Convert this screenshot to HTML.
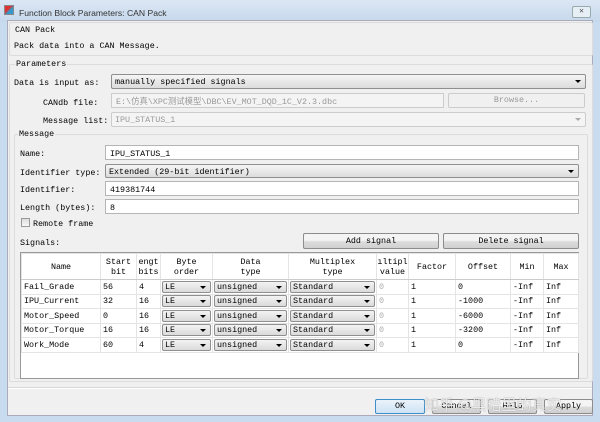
<!DOCTYPE html>
<html><head><meta charset="utf-8"><style>
*{margin:0;padding:0;box-sizing:border-box}
body{width:600px;height:422px;overflow:hidden;background:#c9dbee;font-family:"Liberation Mono","Noto Sans CJK SC",monospace;font-size:8.4px;color:#000;position:relative}
.a{position:absolute;white-space:nowrap;line-height:10px}
.tb{position:absolute;background:#fff;border:1px solid #b5b5b5;padding:3px 0 0 4px;line-height:10px}
.dd{position:absolute;border:1px solid #8e8f8f;border-radius:2px;background:linear-gradient(#f5f5f5,#dcdcdc);padding:2px 0 0 3px;line-height:10px}
.dd:after{content:"";position:absolute;right:4px;top:5px;border-left:3px solid transparent;border-right:3px solid transparent;border-top:3px solid #000}
.dis{color:#999;background:#f4f4f4;border-color:#ccc}
.dis:after{border-top-color:#aaa}
.btn{position:absolute;border:1px solid #8c8c8c;border-radius:2px;background:linear-gradient(#f4f4f4 45%,#dcdcdc 55%,#d0d0d0);text-align:center;line-height:13px}
.grp{position:absolute;border:1px solid #dcdcdc;border-radius:2px}
table{position:absolute;border-collapse:collapse;table-layout:fixed;background:#fff}
td{border:1px solid #e4e4e4;height:14.5px;padding:0 2px;white-space:nowrap;overflow:hidden;line-height:10px}
th{font-weight:normal;border:1px solid #e4e4e4;border-bottom:1px solid #ccc;height:26px;line-height:10px;overflow:hidden;white-space:nowrap}
.c{position:relative;height:12px;border:1px solid #8e8f8f;border-radius:2px;background:linear-gradient(#f3f3f3,#dadada);padding-left:2px;margin:0 -1px}
.c:after{content:"";position:absolute;right:4px;top:4px;border-left:3px solid transparent;border-right:3px solid transparent;border-top:3px solid #000}
.g{color:#aaa}
</style></head><body>
<div class="a" style="left:0;top:0;width:600px;height:22px;background:linear-gradient(#dbe7f4,#c6d8ec)"></div>
<div class="a" style="left:4px;top:5px;width:10px;height:10px;background:linear-gradient(135deg,#d33 40%,#39c 60%);border:1px solid #888"></div>
<div class="a" style="left:19px;top:8px;font-family:'Liberation Sans',sans-serif;font-size:8.6px;color:#333">Function Block Parameters: CAN Pack</div>
<div class="a" style="left:572px;top:6px;width:19px;height:12px;border:1px solid #9aa;border-radius:2px;background:#e6eef6;font-size:8px;text-align:center;color:#555">✕</div>
<div class="a" style="left:7px;top:20px;width:586px;height:396px;background:#f0f0f0;border:1px solid #aab"></div>
<div class="grp" style="left:9px;top:22px;width:584px;height:34px"></div>
<div class="a" style="left:15px;top:25px">CAN Pack</div>
<div class="a" style="left:14px;top:41px">Pack data into a CAN Message.</div>
<div class="grp" style="left:9px;top:64px;width:584px;height:318px"></div>
<div class="a" style="left:15px;top:59px;background:#f0f0f0;padding:0 1px">Parameters</div>
<div class="a" style="left:14px;top:78px">Data is input as:</div>
<div class="dd" style="left:111px;top:74px;width:475px;height:15px">manually specified signals</div>
<div class="a" style="left:43px;top:98px">CANdb file:</div>
<div class="tb dis" style="left:111px;top:93px;width:333px;height:15px;color:#999">E:\仿真\XPC测试模型\DBC\EV_MOT_DQD_1C_V2.3.dbc</div>
<div class="btn" style="left:448px;top:93px;width:137px;height:15px;color:#999;background:#f0f0f0;border-color:#ccc">Browse...</div>
<div class="a" style="left:43px;top:116px">Message list:</div>
<div class="dd dis" style="left:111px;top:112px;width:475px;height:15px">IPU_STATUS_1</div>
<div class="grp" style="left:14px;top:134px;width:574px;height:245px"></div>
<div class="a" style="left:18px;top:129px;background:#f0f0f0;padding:0 1px">Message</div>
<div class="a" style="left:20px;top:149px">Name:</div>
<div class="tb" style="left:105px;top:145px;width:474px;height:15px">IPU_STATUS_1</div>
<div class="a" style="left:20px;top:168px">Identifier type:</div>
<div class="dd" style="left:105px;top:164px;width:474px;height:14px">Extended (29-bit identifier)</div>
<div class="a" style="left:20px;top:185px">Identifier:</div>
<div class="tb" style="left:105px;top:181px;width:474px;height:15px">419381744</div>
<div class="a" style="left:20px;top:203px">Length (bytes):</div>
<div class="tb" style="left:105px;top:199px;width:474px;height:15px">8</div>
<div class="a" style="left:21px;top:218px;width:9px;height:9px;border:1px solid #999;background:linear-gradient(#ddd,#f8f8f8)"></div>
<div class="a" style="left:33px;top:219px">Remote frame</div>
<div class="a" style="left:20px;top:238px">Signals:</div>
<div class="btn" style="left:303px;top:233px;width:136px;height:16px;line-height:14px">Add signal</div>
<div class="btn" style="left:443px;top:233px;width:136px;height:16px;line-height:14px">Delete signal</div>
<div class="a" style="left:20px;top:252px;width:559px;height:127px;background:#fff;border:1px solid #999"></div>
<table style="left:21px;top:253px;width:557px">
<colgroup><col style="width:79px"><col style="width:36px"><col style="width:24px"><col style="width:52px"><col style="width:76px"><col style="width:88px"><col style="width:32px"><col style="width:47px"><col style="width:55px"><col style="width:33px"><col style="width:35px"></colgroup>
<tr><th>Name</th><th>Start<br>bit</th><th>engt<br>bits</th><th>Byte<br>order</th><th>Data<br>type</th><th>Multiplex<br>type</th><th>ıltipl<br>value</th><th>Factor</th><th>Offset</th><th>Min</th><th>Max</th></tr>
<tr><td>Fail_Grade</td><td>56</td><td>4</td><td><div class="c">LE</div></td><td><div class="c">unsigned</div></td><td><div class="c">Standard</div></td><td class="g">0</td><td>1</td><td>0</td><td>-Inf</td><td>Inf</td></tr>
<tr><td>IPU_Current</td><td>32</td><td>16</td><td><div class="c">LE</div></td><td><div class="c">unsigned</div></td><td><div class="c">Standard</div></td><td class="g">0</td><td>1</td><td>-1000</td><td>-Inf</td><td>Inf</td></tr>
<tr><td>Motor_Speed</td><td>0</td><td>16</td><td><div class="c">LE</div></td><td><div class="c">unsigned</div></td><td><div class="c">Standard</div></td><td class="g">0</td><td>1</td><td>-6000</td><td>-Inf</td><td>Inf</td></tr>
<tr><td>Motor_Torque</td><td>16</td><td>16</td><td><div class="c">LE</div></td><td><div class="c">unsigned</div></td><td><div class="c">Standard</div></td><td class="g">0</td><td>1</td><td>-3200</td><td>-Inf</td><td>Inf</td></tr>
<tr><td>Work_Mode</td><td>60</td><td>4</td><td><div class="c">LE</div></td><td><div class="c">unsigned</div></td><td><div class="c">Standard</div></td><td class="g">0</td><td>1</td><td>0</td><td>-Inf</td><td>Inf</td></tr>
</table>
<div class="a" style="left:8px;top:387px;width:584px;border-top:1px solid #d8d8d8;border-bottom:1px solid #fff"></div>
<div class="btn" style="left:375px;top:399px;width:50px;height:15px;border-color:#3c8fc8;background:linear-gradient(#eaf3fb,#cfe3f3)">OK</div>
<div class="btn" style="left:432px;top:399px;width:49px;height:15px">Cancel</div>
<div class="btn" style="left:488px;top:399px;width:49px;height:15px">Help</div>
<div class="btn" style="left:544px;top:399px;width:49px;height:15px">Apply</div>
<div class="a" style="left:424px;top:396px;font-family:'Noto Sans CJK SC',sans-serif;font-size:15px;line-height:18px;color:rgba(255,255,255,.8);text-shadow:0 0 1px rgba(90,90,90,.7)">知乎 @黑暗里的真实</div>
</body></html>
